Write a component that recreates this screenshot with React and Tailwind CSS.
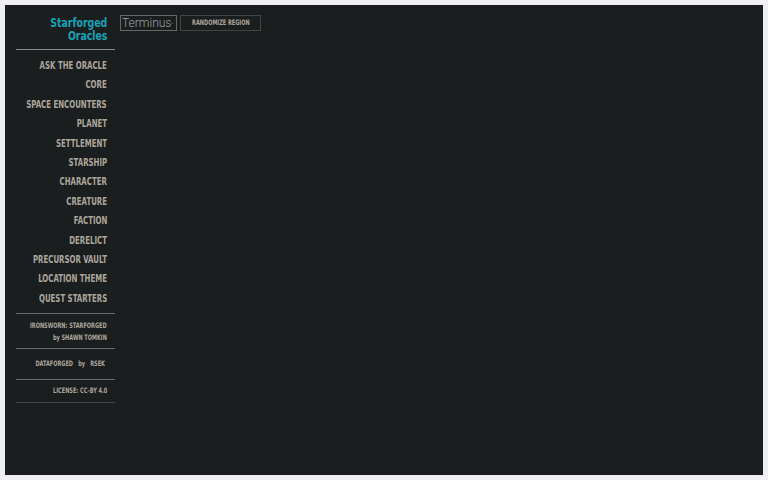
import React from "react";

const items = [
  "ASK THE ORACLE",
  "CORE",
  "SPACE ENCOUNTERS",
  "PLANET",
  "SETTLEMENT",
  "STARSHIP",
  "CHARACTER",
  "CREATURE",
  "FACTION",
  "DERELICT",
  "PRECURSOR VAULT",
  "LOCATION THEME",
  "QUEST STARTERS",
];

const cond = { fontFamily: "'DejaVu Sans Condensed','DejaVu Sans',sans-serif" };

function N({ children, className = "" }) {
  return (
    <span
      className={"inline-block origin-right scale-x-[0.74] whitespace-nowrap " + className}
      style={cond}
    >
      {children}
    </span>
  );
}

export default function App() {
  return (
    <div className="h-[480px] w-[768px] bg-[#f0f0f2] p-[5px]">
      <div className="flex h-[470px] w-[758px] items-start bg-[#1b1e1f]">
        <div className="ml-[11px] flex w-[99px] flex-col">
          <div className="flex flex-col items-end pr-[8px] pt-[11px] text-[13px] font-bold leading-[13px] text-[#1ba2b8]">
            <span
              className="inline-block origin-right scale-x-[0.8] whitespace-nowrap"
              style={cond}
            >
              Starforged
            </span>
            <span
              className="inline-block origin-right scale-x-[0.8] whitespace-nowrap"
              style={cond}
            >
              Oracles
            </span>
          </div>
          <div className="mt-[7px] h-px bg-[#8a8a8a]" />
          <div className="flex flex-col items-end pt-[9px]">
            {items.map((t) => (
              <div
                key={t}
                className="h-[19.4px] pr-[8px] text-[10.5px] font-bold leading-[13px] text-[#aca69c]"
              >
                <N>{t}</N>
              </div>
            ))}
          </div>
          <div className="mt-[2px] h-px bg-[#6a6a6a]" />
          <div className="flex flex-col items-end pr-[8px] pt-[6px] pb-[4px] text-[7.5px] font-bold leading-[12px] text-[#aca69c]">
            <N>IRONSWORN: STARFORGED</N>
            <N>by SHAWN TOMKIN</N>
          </div>
          <div className="h-px bg-[#6a6a6a]" />
          <div className="flex h-[30px] items-center justify-end pr-[10px] text-[7.5px] font-bold text-[#aca69c]">
            <N>DATAFORGED&nbsp;&nbsp;&nbsp;by&nbsp;&nbsp;&nbsp;RSEK</N>
          </div>
          <div className="h-px bg-[#6a6a6a]" />
          <div className="flex h-[22px] items-center justify-end pr-[8px] text-[7.5px] font-bold text-[#aca69c]">
            <N>LICENSE: CC-BY 4.0</N>
          </div>
          <div className="h-px bg-[#444]" />
        </div>
        <div className="ml-[5px] mt-[10px] flex items-center gap-[3px]">
          <div
            className="flex h-[16px] w-[57px] items-center justify-between border border-[#666] pl-[1px] pr-[2px] text-[12px] font-light text-[#a0a0a0]"
            style={{ fontFamily: "Roboto, sans-serif" }}
          >
            <span className="leading-none">Terminus</span>
            <svg width="7" height="5" viewBox="0 0 7 5">
              <path d="M1 1 L3.5 3.5 L6 1" stroke="#aaa" strokeWidth="1.2" fill="none" />
            </svg>
          </div>
          <div className="flex h-[16px] w-[81px] items-center justify-center border border-[#444] text-[7.5px] font-bold text-[#aca69c]">
            <span className="inline-block scale-x-[0.74] whitespace-nowrap" style={cond}>
              RANDOMIZE REGION
            </span>
          </div>
        </div>
      </div>
    </div>
  );
}
